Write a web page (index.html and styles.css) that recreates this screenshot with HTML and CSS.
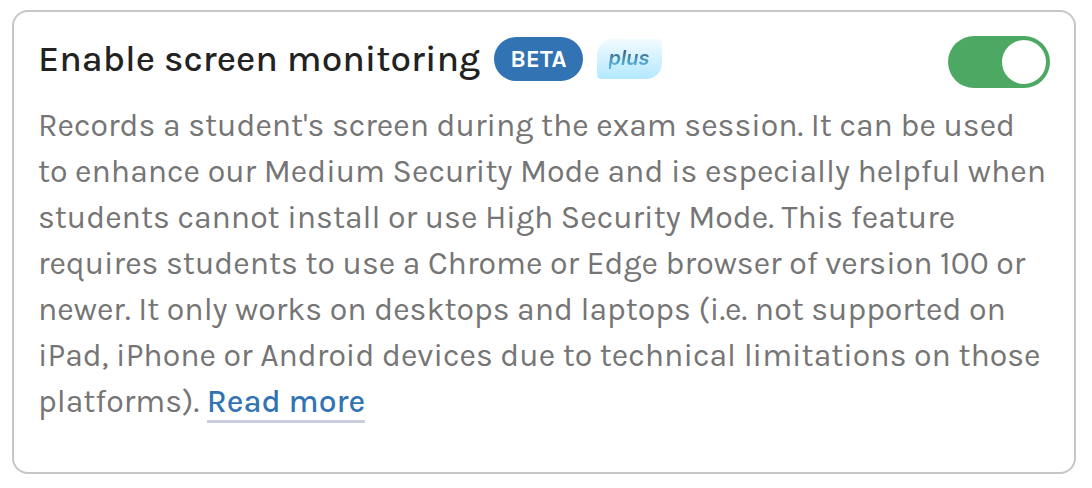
FILE: index.html
```html
<!DOCTYPE html>
<html lang="en">

<head>
    <meta charset="UTF-8">
    <meta name="viewport" content="width=device-width, initial-scale=1.0">
    <title>Screen monitoring</title>
    <link rel="stylesheet" href="styles.css">
</head>

<body>
    <section class="card">
        <div class="card-header">
            <div class="heading">
                <label class="title" for="monitoring">Enable screen monitoring</label>
                <span class="badge">BETA</span>
                <span class="plus"><span class="plus-text">plus</span></span>
            </div>
            <input type="checkbox" role="switch" id="monitoring" class="toggle" checked>
        </div>
        <p class="description">
            Records a student's screen during the exam session. It can be used
            to enhance our Medium Security Mode and is especially helpful when
            students cannot install or use High Security Mode. This feature
            requires students to use a Chrome or Edge browser of version 100 or
            newer. It only works on desktops and laptops (i.e. not supported on
            iPad, iPhone or Android devices due to technical limitations on those
            platforms). <a href="#" class="read-more">Read more</a>
        </p>
    </section>
</body>

</html>
```
FILE: styles.css
```css
* {
    box-sizing: border-box;
}

body {
    margin: 0;
    padding: 10px 16px 14px 12px;
    background-color: #fff;
    font-family: Karla, Inter, "Liberation Sans", sans-serif;
}

.card {
    padding: 24px 24px 47px;
    border: 2px solid #c6c6c6;
    border-radius: 16px;
}

.card-header {
    display: flex;
    align-items: flex-start;
    justify-content: space-between;
}

.heading {
    display: flex;
    align-items: center;
    gap: 14px;
    height: 46px;
}

.title {
    color: #222;
    font-size: 37px;
    font-weight: 500;
    line-height: 44px;
}

.badge {
    padding: 0 16px;
    border-radius: 22px;
    background-color: #3273b3;
    color: #fff;
    font-size: 24px;
    font-weight: 700;
    line-height: 44px;
}

.plus {
    padding: 0 12px 2px;
    border-radius: 16px 4px 16px 4px;
    background: linear-gradient(#f3fbff, #b3e8ff);
    font-family: Inter, sans-serif;
    font-size: 20px;
    font-style: italic;
    font-weight: 600;
    line-height: 38px;
}

.plus-text {
    background: linear-gradient(#3a6f8c 30%, #56b4e0 80%);
    background-clip: text;
    color: transparent;
}

.toggle {
    appearance: none;
    width: 102px;
    height: 52px;
    margin: 0;
    padding: 4px;
    border-radius: 26px;
    background-color: #4da864;
    cursor: pointer;
}

.toggle::before {
    content: "";
    display: block;
    width: 44px;
    height: 44px;
    border-radius: 50%;
    background-color: #fff;
}

.toggle:checked::before {
    margin-left: auto;
}

.description {
    margin: 15px 0 0;
    color: #757575;
    font-size: 32px;
    line-height: 46px;
}

.read-more {
    border-bottom: 3px solid #c8cedc;
    color: #3273b3;
    font-weight: 500;
    text-decoration: none;
}
```
